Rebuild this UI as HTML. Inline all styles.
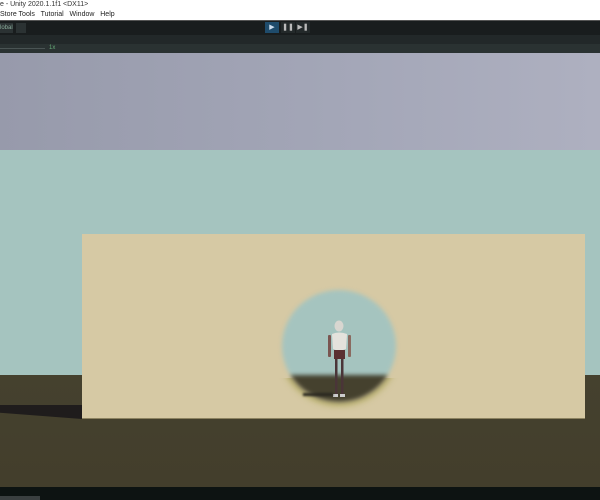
<!DOCTYPE html>
<html><head><meta charset="utf-8"><style>
*{margin:0;padding:0;box-sizing:border-box}
body{width:600px;height:500px;overflow:hidden;position:relative;background:#000;font-family:"Liberation Sans",sans-serif}
.a{position:absolute}
</style></head><body>
<div class="a" style="left:0;top:0;width:600px;height:21px;background:#fff"></div>
<div class="a" style="left:0;top:1px;font-size:7px;color:#333">e - Unity 2020.1.1f1 &lt;DX11&gt;</div>
<div class="a" style="left:0;top:11px;font-size:7px;color:#222">Store Tools&nbsp;&nbsp; Tutorial&nbsp;&nbsp; Window&nbsp;&nbsp; Help</div>
<div class="a" style="left:0;top:20px;width:600px;height:1px;background:#555"></div>
<div class="a" style="left:0;top:21px;width:600px;height:14px;background:#191d1e"></div>
<div class="a" style="left:0;top:23px;width:13px;height:10px;background:#2b3233;font-size:6px;color:#8a9;line-height:10px">lobal</div>
<div class="a" style="left:16px;top:23px;width:10px;height:10px;background:#2b3233"></div>
<div class="a" style="left:265px;top:22px;width:14px;height:11px;background:#1f4c6c;color:#cde;font-size:7px;line-height:11px;text-align:center">▶</div>
<div class="a" style="left:281px;top:22px;width:14px;height:11px;background:#23292a;color:#bbb;font-size:7px;line-height:11px;text-align:center">❚❚</div>
<div class="a" style="left:296px;top:22px;width:14px;height:11px;background:#23292a;color:#bbb;font-size:7px;line-height:11px;text-align:center">▶❚</div>
<div class="a" style="left:0;top:35px;width:600px;height:9px;background:#222829"></div>
<div class="a" style="left:0;top:44px;width:600px;height:9px;background:#2a3232"></div>
<div class="a" style="left:0;top:48px;width:45px;height:1px;background:#4a5454"></div>
<div class="a" style="left:49px;top:44px;font-size:6px;color:#6a7;line-height:9px">1x</div>
<div class="a" style="left:0;top:53px;width:600px;height:97px;background:linear-gradient(90deg,#979aab,#a4a7b8 60%,#aeb0c0)"></div>
<div class="a" style="left:0;top:150px;width:600px;height:225px;background:#a5c4bf"></div>
<div class="a" style="left:0;top:375px;width:600px;height:112px;background:linear-gradient(#45412e,#433e2c)"></div>
<div class="a" style="left:0;top:405px;width:82px;height:14px;background:#1f1c1c;clip-path:polygon(0 0,100% 0,100% 100%,0 55%)"></div>
<div class="a" style="left:82px;top:234px;width:503px;height:185px;background:#d6c9a4;border-bottom:1px solid #8c8260;overflow:hidden">
  <div class="a" style="left:200px;top:56px;width:114px;height:112px;border-radius:50%;box-shadow:0 0 5px 4px #b4ac66;clip-path:inset(88px -20px -20px -20px);filter:blur(2px)"></div>
  <div class="a" style="left:200px;top:56px;width:114px;height:112px;border-radius:50%;background:linear-gradient(#a5c4bf 0,#a5c4bf 85px,#45412e 85px);filter:blur(2px)"></div>
</div>
<svg class="a" style="left:322px;top:318px" width="36" height="82" viewBox="0 0 36 82">
  <ellipse cx="17" cy="8" rx="4.5" ry="5.5" fill="#d8d6d0"/>
  <path d="M10 16 Q17 13 25 16 L24 31 Q17 34 11 31 Z" fill="#e4e2dc"/>
  <rect x="6" y="17" width="3" height="22" rx="1" fill="#7a5550"/>
  <rect x="26" y="17" width="3" height="22" rx="1" fill="#8a6a60"/>
  <rect x="12" y="32" width="11" height="9" fill="#5a3032"/>
  <rect x="13" y="41" width="2.5" height="36" fill="#4a3538"/>
  <rect x="19" y="41" width="2.5" height="36" fill="#4a3538"/>
  <rect x="11" y="76" width="5" height="3" fill="#ccc"/>
  <rect x="18" y="76" width="5" height="3" fill="#ccc"/>
</svg>
<div class="a" style="left:303px;top:393px;width:30px;height:3px;background:#2a2820;filter:blur(1px)"></div>
<div class="a" style="left:0;top:487px;width:600px;height:13px;background:#0d1312"></div>
<div class="a" style="left:0;top:496px;width:40px;height:4px;background:#3a3f40"></div>
</body></html>
